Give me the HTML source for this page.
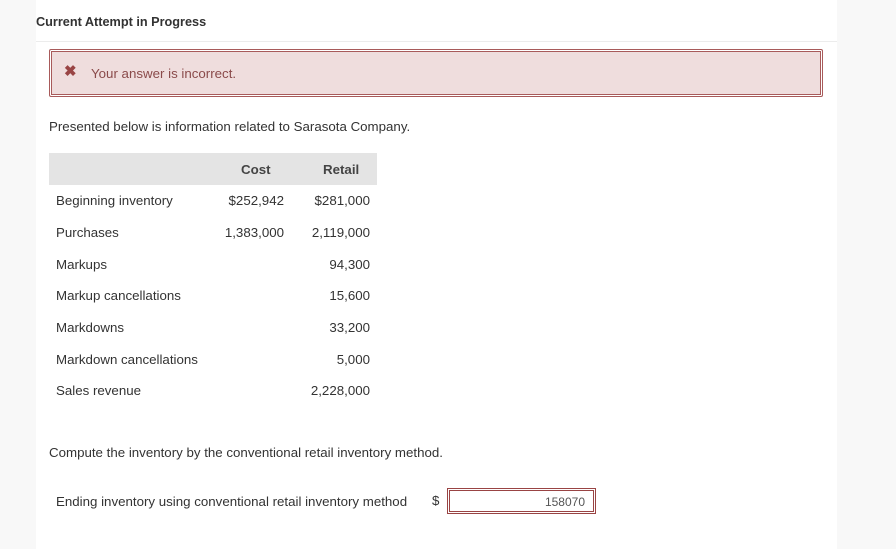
<!DOCTYPE html>
<html><head><style>
body{margin:0;width:896px;height:549px;background:#f8f8f8;font-family:"Liberation Sans",sans-serif;color:#333;position:relative;overflow:hidden}
.main{position:absolute;left:36px;top:0;width:801px;height:549px;background:#fff}
.t{position:absolute;white-space:nowrap;font-size:13.3px;color:#333}
.r{text-align:right}
</style></head><body>
<div class="main"></div>
<div class="t" style="left:36px;top:15px;font-weight:bold;font-size:12.7px;color:#333">Current Attempt in Progress</div>
<div style="position:absolute;left:36px;top:41px;width:801px;height:1px;background:#ececec"></div>
<div style="position:absolute;left:49px;top:49px;width:772px;height:46px;border:1px solid #a85a5a;background:#efdddd;box-shadow:inset 0 0 0 1px #fff,inset 0 0 0 2px #a85a5a;border-radius:2px"></div>
<div class="t" style="left:64px;top:62px;font-size:15px;font-weight:bold;color:#944">✖</div>
<div class="t" style="left:91px;top:66px;color:#8a4a4a">Your answer is incorrect.</div>
<div class="t" style="left:49px;top:119px">Presented below is information related to Sarasota Company.</div>
<div style="position:absolute;left:49px;top:153px;width:328px;height:32px;background:#e4e4e4"></div>
<div class="t" style="left:241px;top:162px;font-weight:bold;color:#444">Cost</div>
<div class="t" style="left:323px;top:162px;font-weight:bold;color:#444">Retail</div>
<div class="t" style="left:56px;top:193px">Beginning inventory</div>
<div class="t" style="left:56px;top:225px">Purchases</div>
<div class="t" style="left:56px;top:257px">Markups</div>
<div class="t" style="left:56px;top:288px">Markup cancellations</div>
<div class="t" style="left:56px;top:320px">Markdowns</div>
<div class="t" style="left:56px;top:352px">Markdown cancellations</div>
<div class="t" style="left:56px;top:383px">Sales revenue</div>
<div class="t r" style="right:612px;top:193px">$252,942</div>
<div class="t r" style="right:612px;top:225px">1,383,000</div>
<div class="t r" style="right:526px;top:193px">$281,000</div>
<div class="t r" style="right:526px;top:225px">2,119,000</div>
<div class="t r" style="right:526px;top:257px">94,300</div>
<div class="t r" style="right:526px;top:288px">15,600</div>
<div class="t r" style="right:526px;top:320px">33,200</div>
<div class="t r" style="right:526px;top:352px">5,000</div>
<div class="t r" style="right:526px;top:383px">2,228,000</div>
<div class="t" style="left:49px;top:445px">Compute the inventory by the conventional retail inventory method.</div>
<div class="t" style="left:56px;top:494px">Ending inventory using conventional retail inventory method</div>
<div class="t" style="left:432px;top:493px">$</div>
<div style="position:absolute;left:447px;top:488px;width:147px;height:24px;border:1px solid #944;box-shadow:inset 0 0 0 1px #fff,inset 0 0 0 2px #944"></div>
<div class="t r" style="right:311px;top:495px;font-size:12px;color:#555">158070</div>
</body></html>
